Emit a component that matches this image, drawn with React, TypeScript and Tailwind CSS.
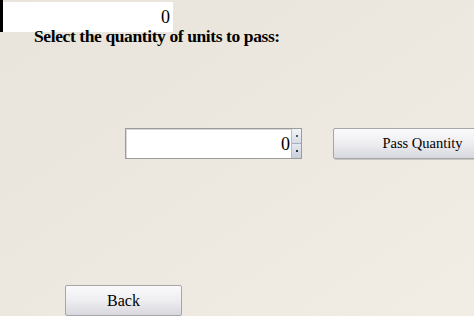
export default function App() {
  return (
    <div
      className="w-[474px] h-[316px] overflow-hidden flex flex-col bg-gradient-to-br from-[#e8e4db] to-[#f1ede4] text-black"
      style={{ fontFamily: '"Liberation Serif", "Times New Roman", serif' }}
    >
      {/* Top counter */}
      <div className="flex items-start">
        <div className="w-[3px] h-[32px] bg-black" />
        <div className="w-[170px] h-[30px] mt-[2px] bg-white flex items-start justify-end pt-[6px] pr-[3px] text-[18px] leading-[18px]">
          0
        </div>
      </div>

      {/* Title */}
      <h1 className="-mt-[5px] ml-[34px] text-[17.5px] leading-[18px] font-bold tracking-[-0.4px] whitespace-nowrap">
        Select the quantity of units to pass:
      </h1>

      {/* Quantity row */}
      <div className="mt-[83px] flex items-start">
        <div className="ml-[125px] shrink-0 w-[177px] h-[31px] flex border border-[#9c9c9c] bg-white shadow-[inset_1px_1px_0_#d8d8d8]">
          <div className="flex-1 flex items-center justify-end pr-[1px] text-[18px] leading-none">
            0
          </div>
          <div className="w-[10px] flex flex-col border-l border-[#b8bcc6]">
            <div className="flex-1 flex items-center justify-center bg-gradient-to-b from-[#f2f4f8] to-[#d6dbe6] border-b border-[#a9afbc]">
              <span className="w-[2px] h-[2px] bg-[#555]" />
            </div>
            <div className="flex-1 flex items-center justify-center bg-gradient-to-b from-[#e6e9f0] to-[#c8cedb]">
              <span className="w-[2px] h-[2px] bg-[#333]" />
            </div>
          </div>
        </div>
        <button className="ml-[31px] shrink-0 w-[179px] h-[31px] rounded-[2px] border border-[#a6a6a6] bg-gradient-to-b from-[#fafafb] via-[#eeeef1] to-[#d7d8de] text-[14.5px] leading-none shadow-[1px_1px_0_#c8c6c0]">
          Pass Quantity
        </button>
      </div>

      {/* Back */}
      <button className="mt-[126px] ml-[65px] w-[117px] h-[31px] shrink-0 rounded-[2px] border border-[#a6a6a6] bg-gradient-to-b from-[#fafafb] via-[#eeeef1] to-[#d7d8de] text-[16px] leading-none">
        Back
      </button>
    </div>
  );
}
